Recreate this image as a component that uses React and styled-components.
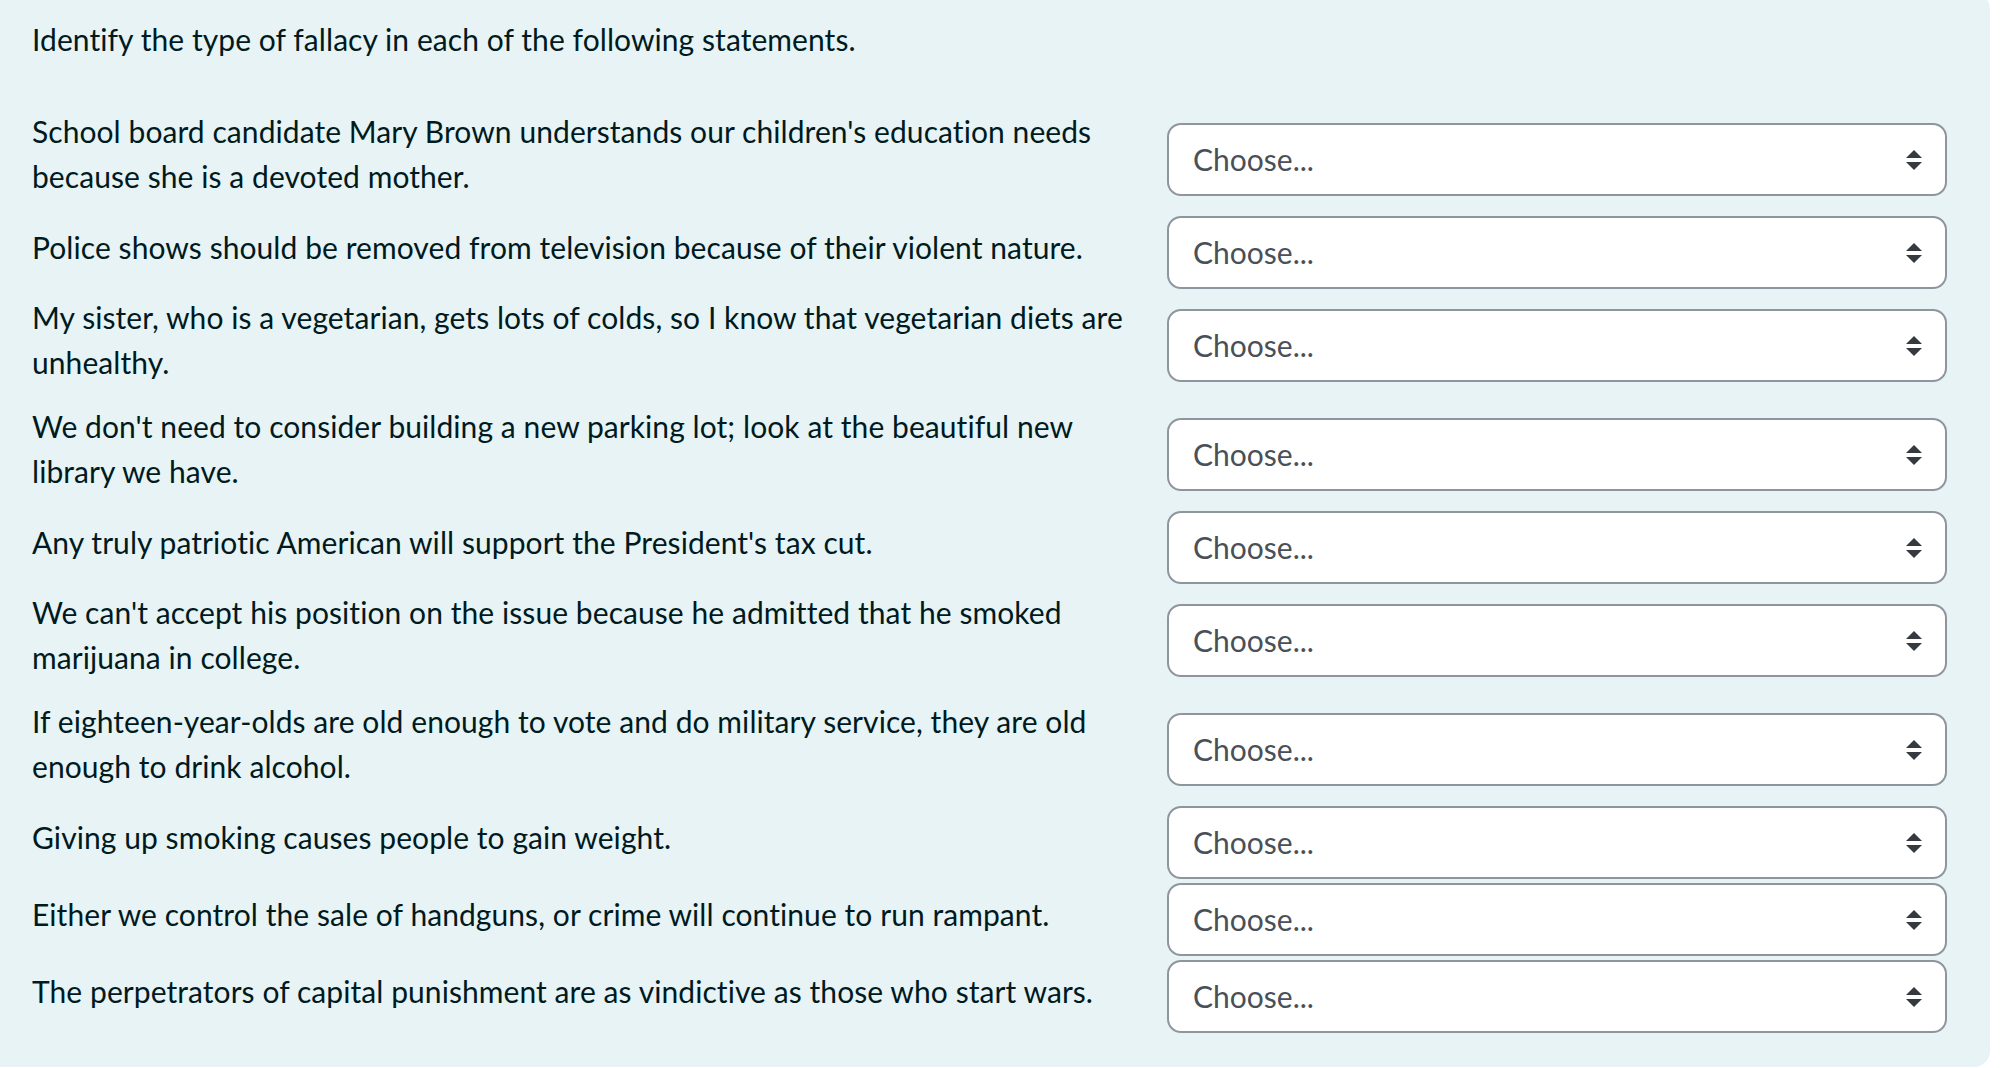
import React from "react";
import styled, { createGlobalStyle } from "styled-components";

const FONT = `Lato, "Liberation Sans", sans-serif`;

const GlobalStyle = createGlobalStyle`
  html, body { margin: 0; padding: 0; background: #ffffff; }
  body { font-family: ${FONT}; overflow: hidden; }
`;

const Panel = styled.div`
  box-sizing: border-box;
  width: 1990px;
  height: 1074px;
  margin-top: -7px;
  padding: 24px 0 0 32px;
  background: #e7f3f5;
  border-radius: 0 16px 16px 0;
  color: #001a1e;
  font-family: ${FONT};
  font-size: 30px;
  line-height: 45px;
  letter-spacing: 0.07px;
`;

const QText = styled.p`
  margin: 0 0 43px;
`;

const AnswerGrid = styled.div`
  display: grid;
  grid-template-columns: 1103px 780px;
  column-gap: 32px;
`;

const Statement = styled.div`
  align-self: center;
  padding: 4px 0 15px;
`;

const ControlCell = styled.div`
  align-self: center;
  padding: 2px 0;
`;

const SelectWrap = styled.div`
  position: relative;
  width: 780px;
`;

const Select = styled.select`
  display: block;
  box-sizing: border-box;
  width: 100%;
  height: 73px;
  padding: 0 56px 0 24px;
  border: 2px solid #8f959e;
  border-radius: 14px;
  background: #ffffff;
  color: #495057;
  font-family: ${FONT};
  font-size: 30px;
  line-height: 45px;
  appearance: none;
  -webkit-appearance: none;
  outline: none;
`;

const Arrow = styled.svg`
  position: absolute;
  right: 25px;
  top: 50%;
  width: 16px;
  height: 20px;
  margin-top: -10px;
  pointer-events: none;
`;

const statements = [
  "School board candidate Mary Brown understands our children's education needs because she is a devoted mother.",
  "Police shows should be removed from television because of their violent nature.",
  "My sister, who is a vegetarian, gets lots of colds, so I know that vegetarian diets are unhealthy.",
  "We don't need to consider building a new parking lot; look at the beautiful new library we have.",
  "Any truly patriotic American will support the President's tax cut.",
  "We can't accept his position on the issue because he admitted that he smoked marijuana in college.",
  "If eighteen-year-olds are old enough to vote and do military service, they are old enough to drink alcohol.",
  "Giving up smoking causes people to gain weight.",
  "Either we control the sale of handguns, or crime will continue to run rampant.",
  "The perpetrators of capital punishment are as vindictive as those who start wars.",
];

function ChoiceSelect({ id }) {
  return (
    <SelectWrap>
      <Select id={id} defaultValue="">
        <option value="">Choose...</option>
      </Select>
      <Arrow viewBox="0 0 4 5" aria-hidden="true">
        <path d="M2 0L0 2h4zm0 5L0 3h4z" fill="#343a40" />
      </Arrow>
    </SelectWrap>
  );
}

export default function App() {
  return (
    <>
      <GlobalStyle />
      <Panel>
        <QText>Identify the type of fallacy in each of the following statements.</QText>
        <AnswerGrid>
          {statements.map((s, i) => (
            <React.Fragment key={i}>
              <Statement>{s}</Statement>
              <ControlCell>
                <ChoiceSelect id={`sub${i}`} />
              </ControlCell>
            </React.Fragment>
          ))}
        </AnswerGrid>
      </Panel>
    </>
  );
}
